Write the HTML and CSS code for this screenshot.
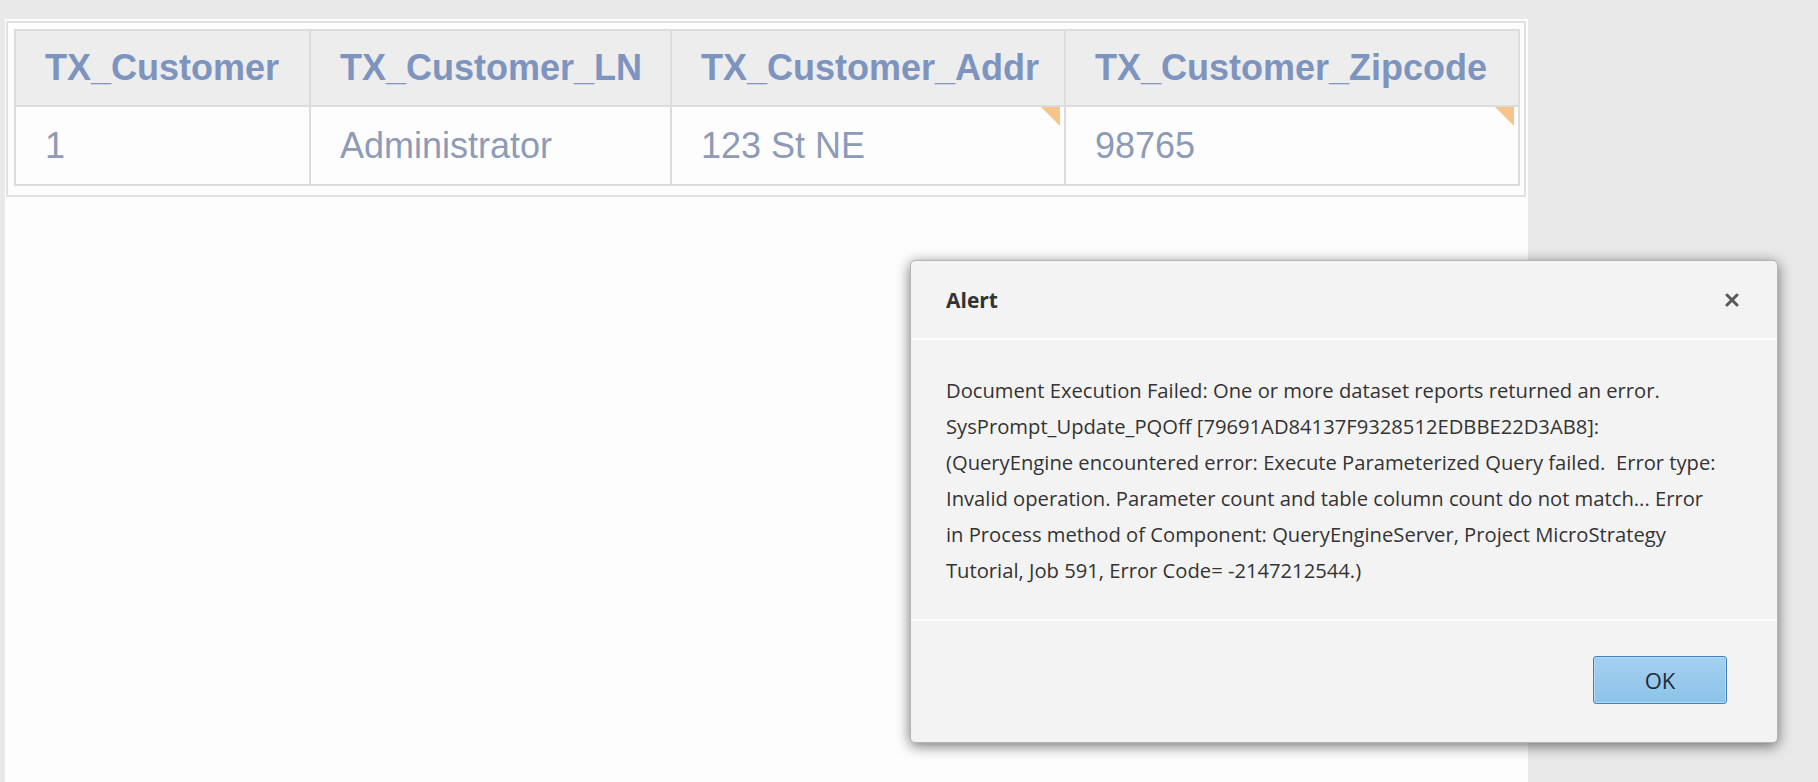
FILE: index.html
```html
<!DOCTYPE html>
<html lang="en">
  <head>
    <meta charset="UTF-8" />
    <title>Document - Alert</title>
    <link rel="stylesheet" href="styles.css">
  </head>
  <body>
    <!-- Document panel -->
    <div class="panel">
      <div class="frame">
        <div class="grid">
          <div class="cell head">TX_Customer</div>
          <div class="cell head">TX_Customer_LN</div>
          <div class="cell head">TX_Customer_Addr</div>
          <div class="cell head">TX_Customer_Zipcode</div>
          <div class="cell">1</div>
          <div class="cell">Administrator</div>
          <div class="cell marked">123 St NE</div>
          <div class="cell marked">98765</div>
        </div>
      </div>
    </div>

    <!-- Alert dialog -->
    <div class="dialog">
      <div class="dialog-head">
        <span class="dialog-title">Alert</span>
        <svg class="close" width="14" height="14" viewBox="0 0 14 14">
          <path d="M2 2L12 12M12 2L2 12" stroke="#5a5a5a" stroke-width="3" stroke-linecap="round" />
        </svg>
      </div>
      <div class="dialog-body">
        Document Execution Failed: One or more dataset reports returned an error.<br>
        SysPrompt_Update_PQOff [79691AD84137F9328512EDBBE22D3AB8]:<br>
        (QueryEngine encountered error: Execute Parameterized Query failed.&nbsp; Error type:<br>
        Invalid operation. Parameter count and table column count do not match... Error<br>
        in Process method of Component: QueryEngineServer, Project MicroStrategy<br>
        Tutorial, Job 591, Error Code= -2147212544.)
      </div>
      <div class="dialog-foot">
        <button class="ok">OK</button>
      </div>
    </div>
  </body>
</html>
```

FILE: styles.css
```css
* {
  box-sizing: border-box;
}
html,
body {
  margin: 0;
  padding: 0;
  height: 100%;
  background-color: #e9e9e9;
  overflow: hidden;
}
body {
  padding: 19px 0 0 5px;
}
.panel {
  width: 1523px;
  height: 100%;
  background-color: #fdfdfd;
  padding: 2px 2px 0 1px;
}
.frame {
  border: 2px solid #e1e1e1;
  padding: 6px 4px 9px 6px;
}
.grid {
  display: grid;
  grid-template-columns: 293px 359px 392px 452px;
  grid-template-rows: 74px 77px;
  gap: 2px;
  padding: 2px;
  background-color: #dcdcdc;
  font-family: "Liberation Sans", Arial, sans-serif;
  font-size: 36px;
}
.cell {
  display: flex;
  align-items: center;
  padding-left: 29px;
  background-color: #fdfdfd;
  color: #8d9bb6;
  white-space: nowrap;
  overflow: hidden;
  position: relative;
}
.cell.head {
  background-color: #ededed;
  color: #7d94bf;
  font-weight: bold;
}
.cell.marked::after {
  content: "";
  position: absolute;
  top: 0;
  right: 4px;
  width: 19px;
  height: 19px;
  background-color: #f5c58c;
  clip-path: polygon(0 0, 100% 0, 100% 100%);
}

/* Alert dialog */
.dialog {
  position: absolute;
  left: 910px;
  top: 260px;
  width: 868px;
  height: 483px;
  display: flex;
  flex-direction: column;
  background-color: #f3f3f3;
  border: 1px solid #b4b4b4;
  border-radius: 5px;
  box-shadow: 0 3px 14px rgba(0, 0, 0, 0.55);
  font-family: "Open Sans", sans-serif;
  color: #333;
}
.dialog-head {
  height: 79px;
  display: flex;
  align-items: center;
  justify-content: space-between;
  padding: 0 38px 0 35px;
  border-bottom: 2px solid #fdfdfd;
}
.dialog-title {
  font-size: 21px;
  font-weight: bold;
}
.dialog-body {
  padding: 32px 35px 31px;
  font-size: 20.2px;
  line-height: 36px;
  white-space: nowrap;
  border-bottom: 2px solid #fdfdfd;
}
.dialog-foot {
  flex: 1;
  display: flex;
  justify-content: flex-end;
  align-items: flex-start;
  padding: 35px 50px 0 0;
}
.ok {
  width: 134px;
  height: 48px;
  border: 1px solid #3f82c2;
  border-radius: 3px;
  background: linear-gradient(#a3d0f0, #8cc3e9);
  box-shadow: inset 0 0 0 1px #b7dbf4;
  font-family: "Open Sans", sans-serif;
  font-size: 22px;
  color: #1f2a3a;
  cursor: pointer;
}
```
